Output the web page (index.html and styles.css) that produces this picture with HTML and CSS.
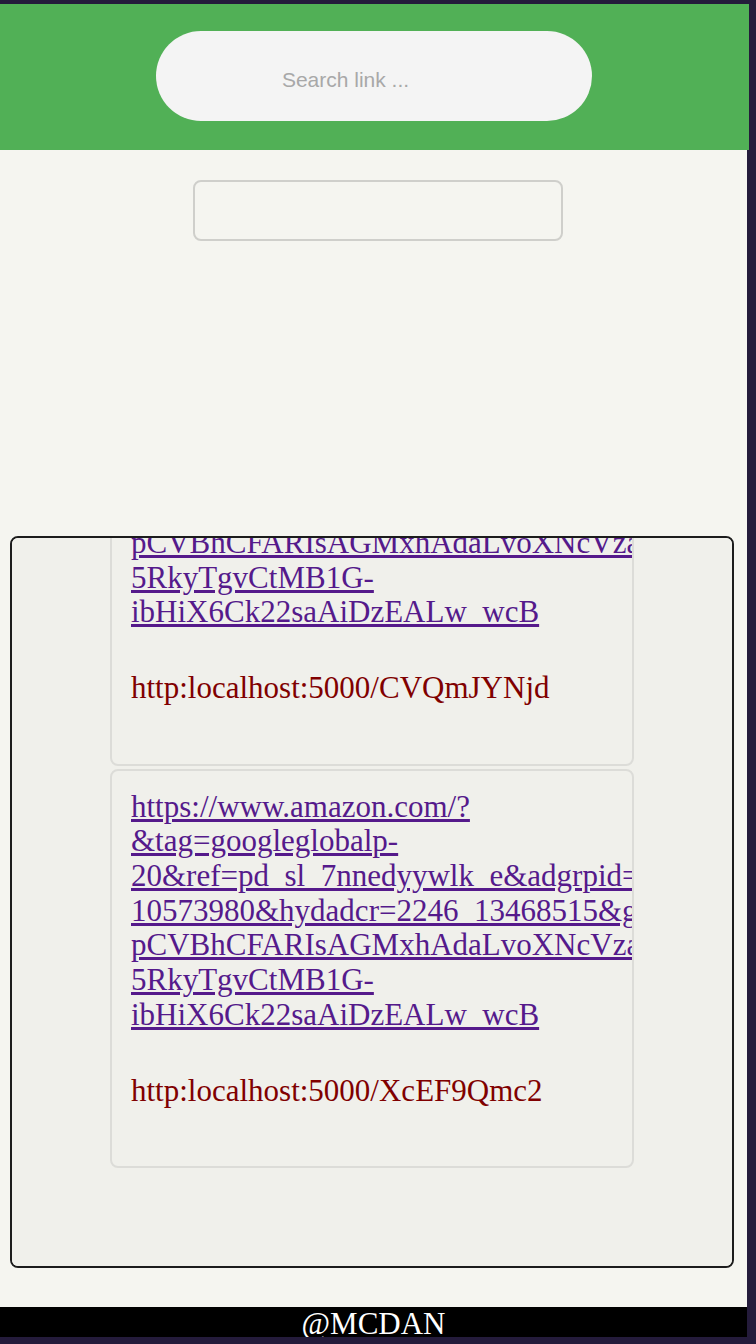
FILE: index.html
```html
<!DOCTYPE html>
<html lang="en">
<head>
<meta charset="utf-8">
<title>Link shortener</title>
<link rel="stylesheet" href="styles.css">
</head>
<body>
<div class="app">
  <header class="topbar">
    <input class="search" type="text" placeholder="Search link ...">
  </header>
  <main class="main">
    <form class="shorten">
      <input class="url-input" type="text" aria-label="URL">
    </form>
    <section class="links" id="links">
      <div class="card">
        <a class="long" href="#">https://www.amazon.com/?<wbr>&amp;tag=googleglobalp-<wbr>20&amp;ref=pd_sl_7nnedyywlk_e&amp;adgrpid=82342659060&amp;hvpone=&amp;hvtargid=kwd-<wbr>10573980&amp;hydadcr=2246_13468515&amp;gclid=Cj0KCQjw8OVBhCpARIsACMvVLO-<wbr>pCVBhCFARIsAGMxhAdaLvoXNcVzaD8Q4sUFMX-<wbr>5RkyTgvCtMB1G-<wbr>ibHiX6Ck22saAiDzEALw_wcB</a>
        <p class="short">http:localhost:5000/CVQmJYNjd</p>
      </div>
      <div class="card">
        <a class="long" href="#">https://www.amazon.com/?<wbr>&amp;tag=googleglobalp-<wbr>20&amp;ref=pd_sl_7nnedyywlk_e&amp;adgrpid=82342659060&amp;hvpone=&amp;hvtargid=kwd-<wbr>10573980&amp;hydadcr=2246_13468515&amp;gclid=Cj0KCQjw8OVBhCpARIsACMvVLO-<wbr>pCVBhCFARIsAGMxhAdaLvoXNcVzaD8Q4sUFMX-<wbr>5RkyTgvCtMB1G-<wbr>ibHiX6Ck22saAiDzEALw_wcB</a>
        <p class="short">http:localhost:5000/XcEF9Qmc2</p>
      </div>
    </section>
  </main>
  <footer class="footer">@MCDAN</footer>
</div>
<script src="script.js"></script>
</body>
</html>
```
FILE: styles.css
```css
html, body {
  margin: 0;
  padding: 0;
}
body {
  background: #241b3b;
  padding-top: 4px;
  font-family: "Liberation Serif", "Times New Roman", serif;
}
.app {
  width: 747px;
  background: #f5f5f0;
}
.topbar {
  width: 749px;
  height: 146px;
  box-sizing: border-box;
  padding-top: 27px;
  background: #51b056;
  display: flex;
  justify-content: center;
  align-items: flex-start;
}
.search {
  width: 436px;
  height: 90px;
  box-sizing: border-box;
  border: none;
  border-radius: 45px;
  background: #f4f4f4;
  padding: 8px 56px 0 0;
  margin-left: -2px;
  font-family: "Liberation Sans", Arial, sans-serif;
  font-size: 21px;
  text-align: center;
  color: #333;
  outline: none;
}
.search::placeholder {
  color: #a8a8a8;
}
.main {
  display: flex;
  flex-direction: column;
}
.shorten {
  margin: 0;
  padding: 30px 0 0 193px;
  display: flex;
}
.url-input {
  width: 370px;
  height: 61px;
  box-sizing: border-box;
  border: 2px solid #cfcfcb;
  border-radius: 8px;
  background: transparent;
  outline: none;
  margin: 0;
}
.links {
  margin: 295px 0 0 10px;
  width: 724px;
  height: 732px;
  box-sizing: border-box;
  border: 2px solid #1c1c1c;
  border-radius: 8px;
  background: #f0f0eb;
  overflow-y: auto;
  scrollbar-width: none;
  padding: 20px 0 110px;
}
.links::-webkit-scrollbar {
  display: none;
}
.card {
  width: 524px;
  box-sizing: border-box;
  margin: 0 auto 3px;
  border: 2px solid #dcdcd8;
  border-radius: 8px;
  background: #f0f0eb;
  padding: 19px 19px 58px;
  overflow: hidden;
  font-family: "Liberation Serif", "Times New Roman", serif;
  font-size: 31px;
  line-height: 34.7px;
}
.long {
  display: block;
  color: #551a8b;
  text-decoration: underline;
}
.short {
  margin: 41px 0 0;
  color: #800000;
}
.footer {
  margin-top: 39px;
  height: 30px;
  background: #000;
  color: #fff;
  text-align: center;
  font-family: "Liberation Serif", "Times New Roman", serif;
  font-size: 31px;
  line-height: 34px;
}
```
FILE: script.js
```js
document.getElementById('links').scrollTop = 192;
```
